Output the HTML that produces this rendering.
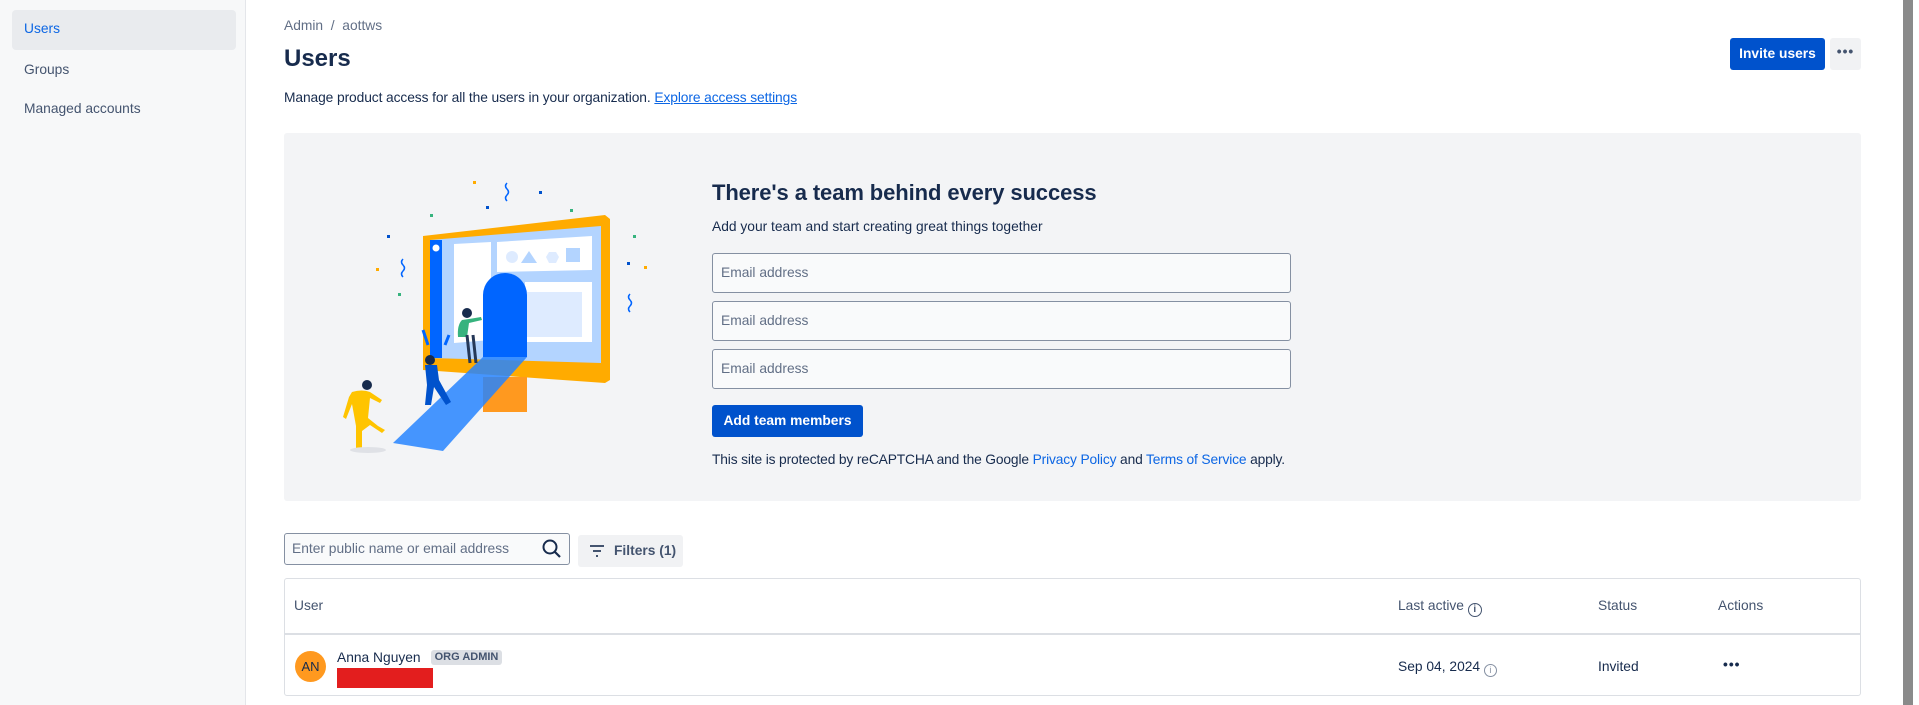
<!DOCTYPE html>
<html><head><meta charset="utf-8"><style>
*{box-sizing:border-box;margin:0;padding:0}
body{width:1919px;height:705px;overflow:hidden;background:#fff;font-family:"Liberation Sans",sans-serif;color:#172b4d;position:relative;font-size:13.8px}
.a{position:absolute;white-space:nowrap}
.side{position:absolute;left:0;top:0;width:246px;height:705px;background:#f7f8f9;border-right:1px solid #e4e6ea}
.inp{position:absolute;left:712px;width:579px;height:40px;border:1px solid #8590a2;border-radius:3px;background:#f9fafb;color:#626f86;padding:0 8px;line-height:38px;font-size:13.8px}
.btn{background:#0052cc;color:#fff;font-weight:bold;border-radius:3px;text-align:center}
</style></head><body>
<div class="side">
  <div class="a" style="left:12px;top:10px;width:224px;height:40px;background:#e9ebee;border-radius:4px"></div>
  <div class="a" style="left:24px;top:21px;color:#0c66e4">Users</div>
  <div class="a" style="left:24px;top:62px;color:#44546f">Groups</div>
  <div class="a" style="left:24px;top:101px;color:#44546f">Managed accounts</div>
</div>
<div class="a" style="left:284px;top:18px;color:#626f86">Admin &nbsp;/&nbsp; aottws</div>
<div class="a" style="left:284px;top:45px;font-size:24px;font-weight:bold">Users</div>
<div class="a" style="left:284px;top:90px;letter-spacing:-0.1px">Manage product access for all the users in your organization. <span style="color:#0c66e4;text-decoration:underline">Explore access settings</span></div>
<div class="a btn" style="left:1730px;top:38px;width:95px;height:32px;line-height:32px">Invite users</div>
<div class="a" style="left:1830px;top:38px;width:31px;height:32px;background:#f1f2f4;border-radius:3px;text-align:center;line-height:28px;font-weight:bold;color:#44546f;letter-spacing:1px">•••</div>
<div class="a" style="left:1903px;top:0;width:10px;height:705px;background:#8a8a8a"></div>

<div class="a" style="left:284px;top:133px;width:1577px;height:368px;background:#f3f4f6;border-radius:3px"></div>
<svg class="a" style="left:280px;top:130px" width="420" height="380" viewBox="280 130 420 380">
 <g fill="#ffab00"><rect x="473" y="181" width="3" height="3"/><rect x="376" y="268" width="3" height="3"/><rect x="644" y="266" width="3" height="3"/></g>
 <g fill="#36b37e"><rect x="430" y="214" width="3" height="3"/><rect x="570" y="209" width="3" height="3"/><rect x="398" y="293" width="3" height="3"/><rect x="633" y="235" width="3" height="3"/></g>
 <g fill="#0052cc"><rect x="387" y="235" width="3" height="3"/><rect x="486" y="206" width="3" height="3"/><rect x="539" y="191" width="3" height="3"/><rect x="627" y="262" width="3" height="3"/></g>
 <g stroke="#0065ff" fill="none" stroke-width="1.5"><path d="M507 183q-3 3 0 6t0 6 0 6"/><path d="M403 259q-3 3 0 6t0 6 0 6"/><path d="M630 294q-3 3 0 6t0 6 0 6"/></g>
 <polygon points="423,236 605,215 610,219 610,380 605,383 423,370" fill="#ffab00"/>
 <polygon points="430,240 601,226 601,363 430,358" fill="#b3d4ff"/>
 <rect x="430" y="240" width="12" height="118" fill="#0065ff"/>
 <circle cx="436" cy="248" r="3.5" fill="#fff"/>
 <polygon points="454,244 491,242 491,340 454,343" fill="#fff"/>
 <polygon points="497,242 592,236 592,270 497,272" fill="#fff"/>
 <circle cx="512" cy="257" r="6" fill="#deebff"/><polygon points="529,251 537,263 521,263" fill="#b3d4ff"/>
 <polygon points="549,252 556,252 559,257 556,263 549,263 546,257" fill="#deebff"/><rect x="566" y="248" width="14" height="14" fill="#b3d4ff"/>
 <rect x="525" y="282" width="67" height="60" fill="#fff"/><rect x="527" y="292" width="55" height="45" fill="#deebff"/>
 <rect x="483" y="377" width="44" height="35" fill="#ff991f"/>
 <path d="M483 357V295a22 22 0 0 1 44 0v62z" fill="#0065ff"/>
 <polygon points="483,357 527,357 443,451 393,443" fill="#2684ff" opacity=".85"/>
 <path d="M462 320q-5 5-4 17l9 0 2-14 13-3-1-3-12 2z" fill="#36b37e"/><circle cx="467" cy="313" r="5" fill="#172b4d"/>
 <path d="M467 335l3 28M473 335l3 28" stroke="#253858" stroke-width="3"/>
 <path d="M428 345l-5-15M445 345l4-10" stroke="#0065ff" stroke-width="3"/><circle cx="430" cy="360" r="5" fill="#172b4d"/>
 <path d="M425 365l2 20-2 20 6 0 3-18 12 18 5-3-12-22-2-15z" fill="#0052cc"/>
 <circle cx="367" cy="385" r="5" fill="#172b4d"/>
 <path d="M352 392q10-3 18 0l12 8-2 3-10-5-2 20 10 8 7 4-3 3-12-8-8 6 0 20-6 0 0-25-4-22-6 15-3-2 6-20z" fill="#ffc400"/>
 <ellipse cx="368" cy="450" rx="18" ry="3" fill="#dfe1e6"/>
</svg>
<div class="a" style="left:712px;top:180px;font-size:22px;font-weight:bold;letter-spacing:-0.1px">There's a team behind every success</div>
<div class="a" style="left:712px;top:219px">Add your team and start creating great things together</div>
<div class="inp" style="top:253px">Email address</div>
<div class="inp" style="top:301px">Email address</div>
<div class="inp" style="top:349px">Email address</div>
<div class="a btn" style="left:712px;top:405px;width:151px;height:32px;line-height:32px">Add team members</div>
<div class="a" style="left:712px;top:452px;letter-spacing:-0.15px">This site is protected by reCAPTCHA and the Google <span style="color:#0c66e4">Privacy Policy</span> and <span style="color:#0c66e4">Terms of Service</span> apply.</div>

<div class="a" style="left:284px;top:533px;width:286px;height:32px;border:1px solid #8590a2;border-radius:3px;background:#f9fafb;padding-left:7px;line-height:30px;color:#626f86">Enter public name or email address</div>
<svg class="a" style="left:541px;top:538px" width="22" height="22" viewBox="0 0 22 22"><circle cx="9" cy="9" r="6.5" fill="none" stroke="#172b4d" stroke-width="2"/><path d="M14 14l5 5" stroke="#172b4d" stroke-width="2.2"/></svg>
<div class="a" style="left:578px;top:535px;width:105px;height:32px;background:#f1f2f4;border-radius:3px"></div>
<svg class="a" style="left:589px;top:544px" width="16" height="14"><path d="M1 2h14M4 7h8M7 12h2" stroke="#44546f" stroke-width="2"/></svg>
<div class="a" style="left:614px;top:543px;font-weight:bold;color:#44546f">Filters (1)</div>

<div class="a" style="left:284px;top:578px;width:1577px;height:118px;border:1px solid #dcdfe4;border-radius:3px"></div>
<div class="a" style="left:285px;top:633px;width:1575px;height:2px;background:#dcdfe4"></div>
<div class="a" style="left:294px;top:598px;color:#44546f">User</div>
<div class="a" style="left:1398px;top:598px;color:#44546f">Last active <span style="display:inline-block;width:14px;height:14px;border:1.5px solid #44546f;border-radius:50%;font-size:10px;text-align:center;line-height:11px;vertical-align:-2px;font-weight:bold">i</span></div>
<div class="a" style="left:1598px;top:598px;color:#44546f">Status</div>
<div class="a" style="left:1718px;top:598px;color:#44546f">Actions</div>
<div class="a" style="left:295px;top:651px;width:31px;height:31px;border-radius:50%;background:#ff991f;color:#172b4d;text-align:center;line-height:31px;font-size:13px">AN</div>
<div class="a" style="left:337px;top:650px">Anna Nguyen</div>
<div class="a" style="left:431px;top:650px;width:71px;height:15px;background:#dcdfe4;border-radius:3px;font-size:11px;font-weight:bold;color:#44546f;text-align:center;line-height:15px">ORG ADMIN</div>
<div class="a" style="left:337px;top:668px;width:96px;height:20px;background:#e31e1e"></div>
<div class="a" style="left:1398px;top:659px">Sep 04, 2024 <span style="display:inline-block;width:13px;height:13px;border:1.2px solid #8590a2;border-radius:50%;font-size:9px;text-align:center;line-height:11px;color:#8590a2;vertical-align:-2px">i</span></div>
<div class="a" style="left:1598px;top:659px">Invited</div>
<div class="a" style="left:1723px;top:657px;font-weight:bold;letter-spacing:1px">•••</div>
</body></html>
